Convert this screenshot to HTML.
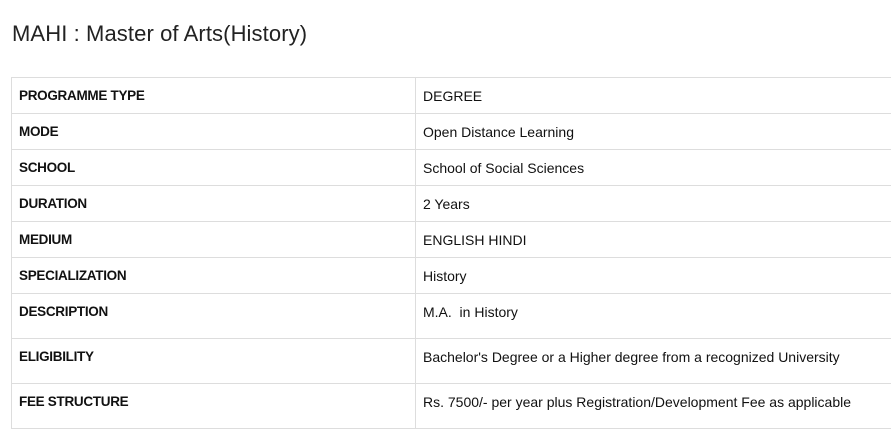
<!DOCTYPE html>
<html><head><style>
body{margin:0;background:#fff;font-family:"Liberation Sans",Arial,sans-serif;color:#111;width:891px;height:430px;overflow:hidden;position:relative}
h1{position:absolute;left:12px;top:21px;margin:0;font-weight:normal;font-size:22px;color:#222;letter-spacing:0.1px}
table{position:absolute;left:11px;top:77px;border-collapse:collapse;width:900px;table-layout:fixed}
td{border:1px solid #ddd;font-size:14px;padding:0 7px;vertical-align:top;padding-top:10px;box-sizing:border-box}
td:first-child{width:404px;font-weight:bold;letter-spacing:-0.3px;font-size:13.5px}
tr{height:36px}
tr.t{height:45px}
</style></head><body>
<h1>MAHI : Master of Arts(History)</h1>
<table>
<tr><td>PROGRAMME TYPE</td><td>DEGREE</td></tr>
<tr><td>MODE</td><td>Open Distance Learning</td></tr>
<tr><td>SCHOOL</td><td>School of Social Sciences</td></tr>
<tr><td>DURATION</td><td>2 Years</td></tr>
<tr><td>MEDIUM</td><td>ENGLISH HINDI</td></tr>
<tr><td>SPECIALIZATION</td><td>History</td></tr>
<tr class="t"><td>DESCRIPTION</td><td>M.A.&nbsp; in History</td></tr>
<tr class="t"><td>ELIGIBILITY</td><td>Bachelor's Degree or a Higher degree from a recognized University</td></tr>
<tr class="t"><td>FEE STRUCTURE</td><td>Rs. 7500/- per year plus Registration/Development Fee as applicable</td></tr>
</table>
</body></html>
